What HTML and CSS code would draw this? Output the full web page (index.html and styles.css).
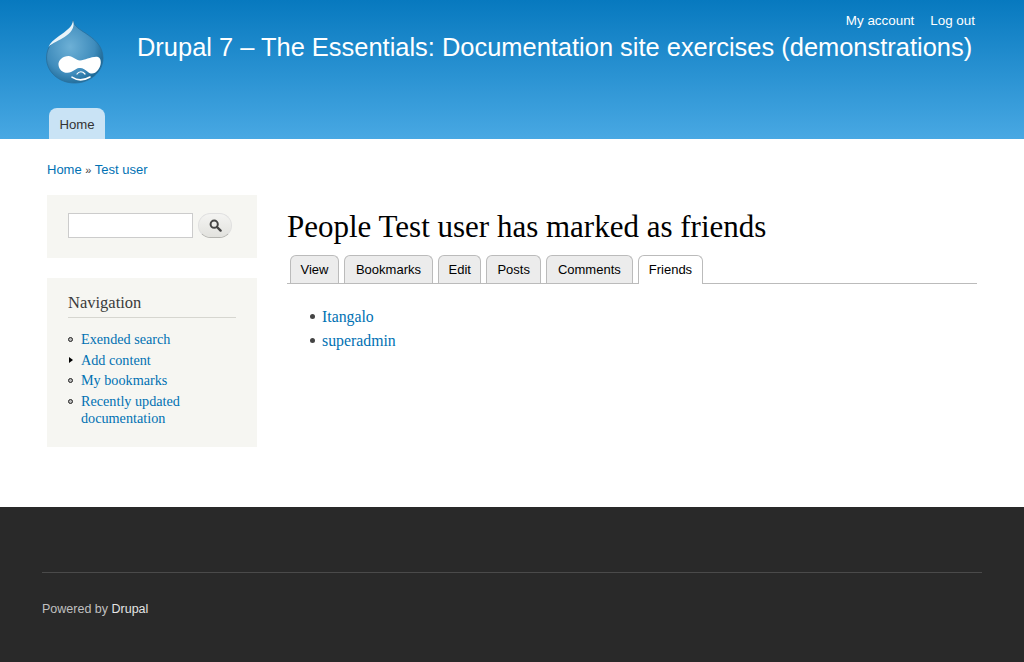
FILE: index.html
```html
<!DOCTYPE html>
<html lang="en">
<head>
    <meta charset="UTF-8">
    <meta name="viewport" content="width=device-width, initial-scale=1.0">
    <title>People Test user has marked as friends</title>
    <link rel="stylesheet" href="styles.css">
</head>
<body>
    <!-- Header -->
    <header class="site-header">
        <div class="header-top">
            <a class="logo" href="#">
                <svg width="58" height="64" viewBox="0 0 58 64">
                    <defs>
                        <radialGradient id="drop" cx="42%" cy="42%" r="62%">
                            <stop offset="0" stop-color="#6db0d6"/>
                            <stop offset="0.7" stop-color="#3f8cbc"/>
                            <stop offset="1" stop-color="#1d6996"/>
                        </radialGradient>
                    </defs>
                    <path d="M27 0.5C27.5 6 23 9.5 17 14C8 20 0.5 26 0.5 38C0.5 52 13 63 28.5 63C44 63 57 52 57 38C57 25 47 18.5 40 13.5C33 9 28 6 27 0.5Z" fill="url(#drop)" stroke="#2a6f9c" stroke-width="0.8"/>
                    <path d="M27 0.5C26.5 7 20 11 13 16C8 19.5 4 23 2.5 27C7 22 13 21 18.5 17C24 13.5 29.5 8 27 0.5Z" fill="#e9f4fa"/>
                    <path d="M12.5 45C12 40 17 36 22.5 36C27 36 30 40.5 34 40.5C39 40.5 46 36 52 37C56 38.5 55.5 46 52 50C49 54 45 54.5 42 52C39 49.5 36.5 47.5 33 48C29 48.5 27 52.5 21.5 52.8C17 53 13 50 12.5 45Z" fill="#fff"/>
                    <path d="M26 57.2C31 60.5 38 60.5 44 57" fill="none" stroke="#fff" stroke-width="1.6" stroke-linecap="round"/>
                    <path d="M31 54C33 51 36.5 51 39 54" fill="none" stroke="#fff" stroke-width="1.2" stroke-linecap="round"/>
                </svg>
            </a>
            <div class="header-text">
                <ul class="secondary-menu">
                    <li><a href="#">My account</a></li>
                    <li><a href="#">Log out</a></li>
                </ul>
                <div class="site-name">Drupal 7 – The Essentials: Documentation site exercises (demonstrations)</div>
            </div>
        </div>
        <ul class="main-menu">
            <li><a href="#">Home</a></li>
        </ul>
    </header>

    <!-- Page -->
    <div class="page">
        <div class="breadcrumb"><a href="#">Home</a> <span class="sep">»</span> <a href="#">Test user</a></div>
        <div class="columns">
            <aside class="sidebar">
                <div class="block search-block">
                    <input class="search-input" type="text">
                    <button class="search-button" type="button" aria-label="Search">
                        <svg width="13" height="13" viewBox="0 0 13 13">
                            <circle cx="5.2" cy="5.2" r="3.6" fill="none" stroke="#444" stroke-width="2"/>
                            <path d="M8 8L11.6 11.6" stroke="#444" stroke-width="2.4" stroke-linecap="round"/>
                        </svg>
                    </button>
                </div>
                <div class="block nav-block">
                    <h2>Navigation</h2>
                    <ul class="nav-list">
                        <li><a href="#">Exended search</a></li>
                        <li class="collapsed"><a href="#">Add content</a></li>
                        <li><a href="#">My bookmarks</a></li>
                        <li><a href="#">Recently updated documentation</a></li>
                    </ul>
                </div>
            </aside>
            <main class="content">
                <h1>People Test user has marked as friends</h1>
                <ul class="tabs">
                    <li class="tab-narrow"><a href="#">View</a></li>
                    <li class="tab-wide"><a href="#">Bookmarks</a></li>
                    <li class="tab-narrow"><a href="#">Edit</a></li>
                    <li><a href="#">Posts</a></li>
                    <li class="tab-wide"><a href="#">Comments</a></li>
                    <li class="active"><a href="#">Friends</a></li>
                </ul>
                <ul class="friends">
                    <li><a href="#">Itangalo</a></li>
                    <li><a href="#">superadmin</a></li>
                </ul>
            </main>
        </div>
    </div>

    <!-- Footer -->
    <footer class="site-footer">
        <div class="footer-inner">Powered by <a href="#">Drupal</a></div>
    </footer>
</body>
</html>
```

FILE: styles.css
```css
html, body {
    margin: 0;
    padding: 0;
}
body {
    font-family: "Liberation Sans", Arial, sans-serif;
    font-size: 13px;
    color: #3b3b3b;
    background: #fff;
}
a {
    color: #0071b3;
    text-decoration: none;
}
ul {
    margin: 0;
    padding: 0;
    list-style: none;
}

/* header */
.site-header {
    height: 139px;
    box-sizing: border-box;
    padding: 0 47px 0 46px;
    background: linear-gradient(#0779bf, #48a8e3);
    display: flex;
    flex-direction: column;
}
.header-top {
    display: flex;
    height: 108px;
}
.logo {
    width: 91px;
    padding-top: 20px;
    flex-shrink: 0;
}
.header-text {
    flex: 1;
}
.secondary-menu {
    display: flex;
    justify-content: flex-end;
    gap: 16px;
    padding: 13px 2px 0 0;
    font-size: 13.4px;
    line-height: 15px;
}
.secondary-menu a {
    color: #fff;
}
.site-name {
    margin-top: 3px;
    font-size: 25.44px;
    line-height: 32px;
    color: #fff;
    white-space: nowrap;
}
.main-menu {
    display: flex;
    padding-left: 3px;
}
.main-menu a {
    display: block;
    width: 56px;
    height: 31px;
    line-height: 33px;
    text-align: center;
    font-size: 13.2px;
    color: #333;
    background: #c9e3f5;
    border-radius: 8px 8px 0 0;
}

/* page */
.page {
    height: 368px;
    padding: 0 47px;
}
.breadcrumb {
    padding-top: 23px;
    line-height: 15px;
    height: 33px;
    color: #3b3b3b;
}
.sep {
    font-size: 11px;
}
.columns {
    display: flex;
    gap: 30px;
}
.sidebar {
    width: 210px;
    flex-shrink: 0;
}
.block {
    background: #f6f6f2;
    box-sizing: border-box;
    padding: 0 21px;
}
.search-block {
    height: 63px;
    margin-bottom: 20px;
    display: flex;
    align-items: center;
    gap: 5px;
}
.search-input {
    width: 125px;
    height: 25px;
    box-sizing: border-box;
    border: 1px solid #ccc;
    background: #fff;
    margin: -2px 0 0;
    padding: 0;
}
.search-button {
    width: 34px;
    height: 25px;
    margin: -2px 0 0;
    padding: 0;
    border: 1px solid #e0e0e0;
    border-bottom-color: #b4b4b0;
    border-radius: 15px;
    background: linear-gradient(#f4f4f2, #e2e2de);
    display: flex;
    align-items: center;
    justify-content: center;
}
.nav-block {
    height: 169px;
    padding-top: 16px;
}
.nav-block h2 {
    margin: 0 0 13px;
    padding-bottom: 5px;
    border-bottom: 1px solid #d6d6d0;
    font-family: "Liberation Serif", serif;
    font-weight: normal;
    font-size: 16.5px;
    line-height: 18px;
    color: #3b3b3b;
    width: 168px;
}
.nav-list {
    font-family: "Liberation Serif", serif;
    font-size: 14.2px;
    line-height: 17px;
}
.nav-list li {
    position: relative;
    padding: 0 40px 3.7px 13px;
}
.nav-list li::before {
    content: "";
    position: absolute;
    left: 0;
    top: 6px;
    width: 3px;
    height: 3px;
    border: 1px solid #222;
    border-radius: 50%;
    background: #bbb;
}
.nav-list li.collapsed::before {
    top: 5px;
    left: 1px;
    width: 0;
    height: 0;
    border-style: solid;
    border-width: 3.5px 0 3.5px 4px;
    border-color: transparent transparent transparent #000;
    border-radius: 0;
    background: none;
}

/* content */
.content {
    flex: 1;
}
.content h1 {
    margin: 0;
    padding-top: 15px;
    font-family: "Liberation Serif", serif;
    font-weight: normal;
    font-size: 31px;
    line-height: 34px;
    height: 45px;
    color: #000;
}
.tabs {
    display: flex;
    gap: 5px;
    padding-left: 3px;
    height: 28px;
    border-bottom: 1px solid #bbb;
}
.tabs a {
    display: block;
    height: 27px;
    line-height: 28px;
    padding: 0 10px;
    color: #000;
    background: #ececec;
    border: 1px solid #bbb;
    border-bottom: 0;
    border-radius: 6px 6px 0 0;
}
.tabs .tab-narrow a {
    padding: 0 9.5px;
}
.tabs .tab-wide a {
    padding: 0 11px;
}
.tabs .active a {
    background: #fff;
    height: 28px;
}
.friends {
    margin-top: 21px;
    padding-left: 35px;
    font-family: "Liberation Serif", serif;
    font-size: 15.8px;
    line-height: 24px;
}
.friends li {
    position: relative;
}
.friends li::before {
    content: "";
    position: absolute;
    left: -12px;
    top: 9px;
    width: 5px;
    height: 5px;
    border-radius: 50%;
    background: #444;
}

/* footer */
.site-footer {
    height: 155px;
    box-sizing: border-box;
    padding: 65px 42px 0;
    background: #292929;
}
.footer-inner {
    border-top: 1px solid #4a4a4a;
    padding-top: 29px;
    font-size: 12.5px;
    line-height: 14px;
    color: #c0c0c0;
}
.footer-inner a {
    color: #e4e4e4;
}
```
